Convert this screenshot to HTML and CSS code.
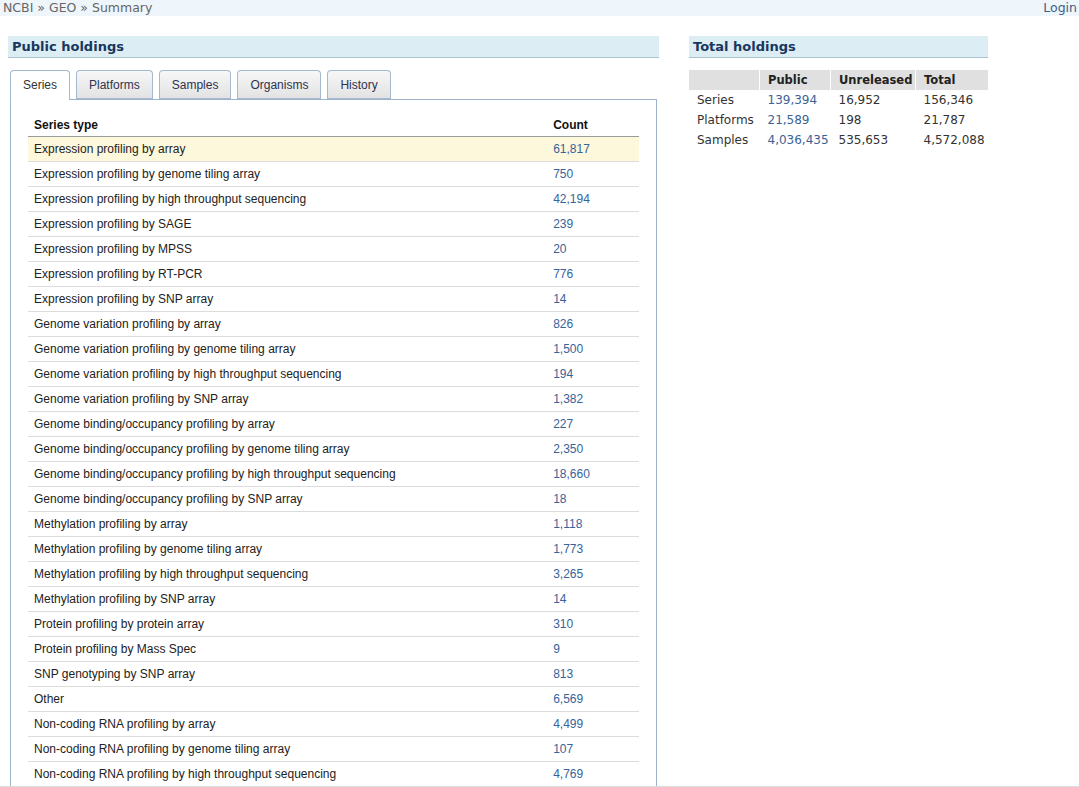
FILE: index.html
```html
<!DOCTYPE html>
<html lang="en">
<head>
<meta charset="utf-8">
<title>GEO Summary</title>
<link rel="stylesheet" href="styles.css">
</head>
<body>
<div class="topbar">
  <div class="crumbs"><a href="#">NCBI</a> &raquo; <a href="#">GEO</a> &raquo; <span>Summary</span></div>
  <a class="login" href="#">Login</a>
</div>

<div class="main">
  <section class="public">
    <h2 class="section-title">Public holdings</h2>
    <ul class="tabs">
      <li class="tab active">Series</li>
      <li class="tab">Platforms</li>
      <li class="tab">Samples</li>
      <li class="tab">Organisms</li>
      <li class="tab">History</li>
    </ul>
    <div class="panel">
      <table class="counts">
        <colgroup><col class="c-type"><col class="c-num"></colgroup>
        <thead>
          <tr><th>Series type</th><th>Count</th></tr>
        </thead>
        <tbody>
          <tr class="hl"><td>Expression profiling by array</td><td><a href="#">61,817</a></td></tr>
          <tr><td>Expression profiling by genome tiling array</td><td><a href="#">750</a></td></tr>
          <tr><td>Expression profiling by high throughput sequencing</td><td><a href="#">42,194</a></td></tr>
          <tr><td>Expression profiling by SAGE</td><td><a href="#">239</a></td></tr>
          <tr><td>Expression profiling by MPSS</td><td><a href="#">20</a></td></tr>
          <tr><td>Expression profiling by RT-PCR</td><td><a href="#">776</a></td></tr>
          <tr><td>Expression profiling by SNP array</td><td><a href="#">14</a></td></tr>
          <tr><td>Genome variation profiling by array</td><td><a href="#">826</a></td></tr>
          <tr><td>Genome variation profiling by genome tiling array</td><td><a href="#">1,500</a></td></tr>
          <tr><td>Genome variation profiling by high throughput sequencing</td><td><a href="#">194</a></td></tr>
          <tr><td>Genome variation profiling by SNP array</td><td><a href="#">1,382</a></td></tr>
          <tr><td>Genome binding/occupancy profiling by array</td><td><a href="#">227</a></td></tr>
          <tr><td>Genome binding/occupancy profiling by genome tiling array</td><td><a href="#">2,350</a></td></tr>
          <tr><td>Genome binding/occupancy profiling by high throughput sequencing</td><td><a href="#">18,660</a></td></tr>
          <tr><td>Genome binding/occupancy profiling by SNP array</td><td><a href="#">18</a></td></tr>
          <tr><td>Methylation profiling by array</td><td><a href="#">1,118</a></td></tr>
          <tr><td>Methylation profiling by genome tiling array</td><td><a href="#">1,773</a></td></tr>
          <tr><td>Methylation profiling by high throughput sequencing</td><td><a href="#">3,265</a></td></tr>
          <tr><td>Methylation profiling by SNP array</td><td><a href="#">14</a></td></tr>
          <tr><td>Protein profiling by protein array</td><td><a href="#">310</a></td></tr>
          <tr><td>Protein profiling by Mass Spec</td><td><a href="#">9</a></td></tr>
          <tr><td>SNP genotyping by SNP array</td><td><a href="#">813</a></td></tr>
          <tr><td>Other</td><td><a href="#">6,569</a></td></tr>
          <tr><td>Non-coding RNA profiling by array</td><td><a href="#">4,499</a></td></tr>
          <tr><td>Non-coding RNA profiling by genome tiling array</td><td><a href="#">107</a></td></tr>
          <tr><td>Non-coding RNA profiling by high throughput sequencing</td><td><a href="#">4,769</a></td></tr>
        </tbody>
      </table>
    </div>
  </section>

  <section class="total">
    <h2 class="section-title">Total holdings</h2>
    <table class="totals">
      <thead>
        <tr><th></th><th>Public</th><th>Unreleased</th><th>Total</th></tr>
      </thead>
      <tbody>
        <tr><td>Series</td><td><a href="#">139,394</a></td><td>16,952</td><td>156,346</td></tr>
        <tr><td>Platforms</td><td><a href="#">21,589</a></td><td>198</td><td>21,787</td></tr>
        <tr><td>Samples</td><td><a href="#">4,036,435</a></td><td>535,653</td><td>4,572,088</td></tr>
      </tbody>
    </table>
  </section>
</div>
<div class="page-edge"></div>
</body>
</html>
```

FILE: styles.css
```css
html, body {
  margin: 0;
  padding: 0;
  background: #fff;
}

body {
  font-family: "DejaVu Sans", Verdana, sans-serif;
  color: #333;
  overflow: hidden;
}

a {
  text-decoration: none;
}

/* breadcrumb strip */
.topbar {
  display: flex;
  justify-content: space-between;
  align-items: center;
  height: 16px;
  padding: 0 2px 0 3px;
  background: #eef5fb;
  font-size: 12.5px;
  line-height: 16px;
  color: #666;
}

.crumbs a,
.crumbs span {
  color: #666;
}

.login {
  color: #3f5e86;
}

/* two-column body */
.main {
  display: flex;
  align-items: flex-start;
  padding: 20px 0 0 8px;
}

.public {
  width: 651px;
}

.total {
  width: 299px;
  margin-left: 30px;
}

.section-title {
  margin: 0;
  height: 21px;
  padding-left: 4px;
  background: #ddedf4;
  border-bottom: 1px solid #abc1d2;
  font-size: 13px;
  font-weight: bold;
  line-height: 22px;
  color: #17375e;
}

/* tab strip */
.tabs {
  display: flex;
  gap: 6px;
  list-style: none;
  margin: 12px 0 0 2px;
  padding: 0;
  position: relative;
  z-index: 1;
}

.tab {
  height: 28px;
  padding: 0 12px;
  border: 1px solid #a5b9ce;
  border-bottom: none;
  border-radius: 4px 4px 0 0;
  background: linear-gradient(#f7f7f7, #e2e2e2);
  font-family: "Liberation Sans", Arial, sans-serif;
  font-size: 12px;
  line-height: 29px;
  color: #2e3350;
  box-shadow: inset 0 -1px 0 #a5b9ce;
}

.tab.active {
  height: 29px;
  margin-bottom: -1px;
  background: #fff;
  box-shadow: none;
  color: #333;
}

.panel {
  width: 611px;
  height: 720px;
  margin-left: 2px;
  padding: 13px 17px 0;
  border: 1px solid #9db3cb;
  overflow: hidden;
}

/* series counts table */
.counts {
  width: 611px;
  table-layout: fixed;
  border-collapse: collapse;
  font-family: "Liberation Sans", Arial, sans-serif;
  font-size: 12px;
  color: #222;
}

.counts .c-type {
  width: 509px;
}

.counts .c-num {
  width: 90px;
}

.counts th {
  height: 23px;
  padding: 0 0 0 6px;
  text-align: left;
  font-weight: bold;
  border-bottom: 1px solid #9a9a9a;
  color: #111;
}

.counts td {
  height: 24px;
  padding: 0 0 0 6px;
  border-bottom: 1px solid #dcdcdc;
  vertical-align: middle;
}

.counts tr.hl td {
  background: #fdf8dc;
}

.counts a {
  color: #36639a;
}

/* totals table */
.totals {
  width: 299px;
  margin-top: 12px;
  border-collapse: collapse;
  font-size: 12px;
  color: #333;
}

.totals th {
  height: 20px;
  padding: 0 0 0 8px;
  background: #e0e0e0;
  border-left: 1px solid #fff;
  text-align: left;
  font-size: 11.5px;
  font-weight: bold;
  color: #222;
}

.totals th:first-child {
  width: 62px;
  border-left: none;
}

.totals th:nth-child(2) {
  width: 62px;
}

.totals th:nth-child(3) {
  width: 76px;
}

.totals td {
  height: 20px;
  padding: 0 0 0 8px;
  white-space: nowrap;
}

.totals a {
  color: #3a6297;
}

.page-edge {
  position: fixed;
  left: 0;
  right: 0;
  bottom: 0;
  height: 1px;
  background: #dcdcdc;
}
```
